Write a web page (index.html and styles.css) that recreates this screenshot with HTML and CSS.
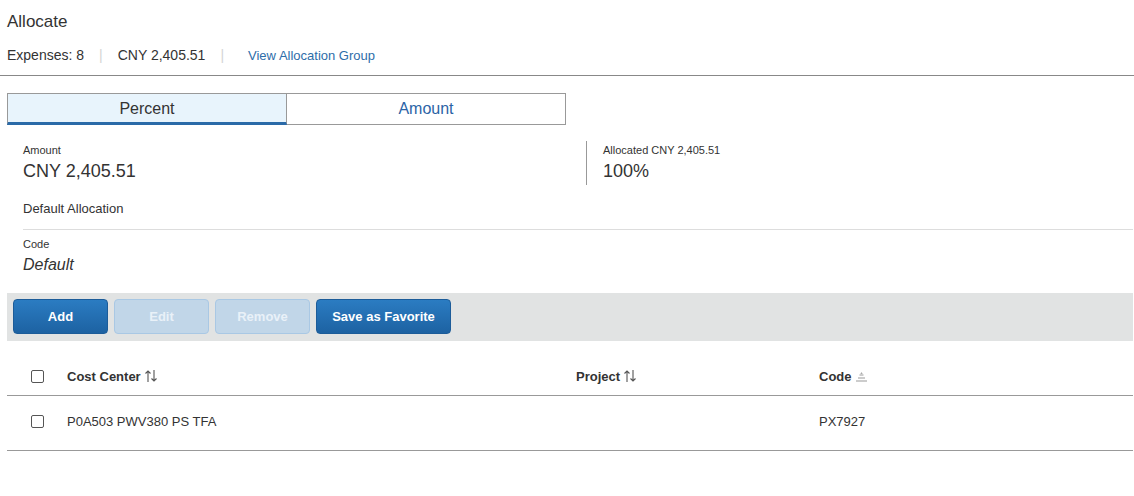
FILE: index.html
```html
<!DOCTYPE html>
<html lang="en">
<head>
    <meta charset="UTF-8">
    <title>Allocate</title>
    <link rel="stylesheet" href="styles.css">
</head>
<body>
    <div class="page-header">
        <div class="page-title">Allocate</div>
        <div class="meta-row">
            <span>Expenses: 8</span>
            <span class="sep">|</span>
            <span>CNY 2,405.51</span>
            <span class="sep">|</span>
            <a href="#" class="meta-link">View Allocation Group</a>
        </div>
    </div>

    <div class="content">
        <div class="tabs">
            <div class="tab active">Percent</div>
            <div class="tab">Amount</div>
        </div>

        <div class="summary">
            <div class="summary-col">
                <div class="field-label">Amount</div>
                <div class="field-value">CNY 2,405.51</div>
            </div>
            <div class="summary-col divided">
                <div class="field-label">Allocated CNY 2,405.51</div>
                <div class="field-value">100%</div>
            </div>
        </div>

        <div class="default-alloc">Default Allocation</div>

        <div class="code-field">
            <div class="field-label">Code</div>
            <div class="code-value">Default</div>
        </div>

        <div class="toolbar">
            <button class="btn">Add</button>
            <button class="btn" disabled>Edit</button>
            <button class="btn" disabled>Remove</button>
            <button class="btn wide">Save as Favorite</button>
        </div>

        <div class="grid">
            <div class="grid-row head">
                <div class="cell cb"><span class="checkbox"></span></div>
                <div class="cell">Cost Center
                    <svg class="sort-icon" width="14" height="14" viewBox="0 0 14 14">
                        <path d="M4 13V2M1.5 4.5L4 2l2.5 2.5" fill="none" stroke="#555" stroke-width="1.1"/>
                        <path d="M10 1v11M7.5 9.5L10 12l2.5-2.5" fill="none" stroke="#555" stroke-width="1.1"/>
                    </svg>
                </div>
                <div class="cell">Project
                    <svg class="sort-icon" width="14" height="14" viewBox="0 0 14 14">
                        <path d="M4 13V2M1.5 4.5L4 2l2.5 2.5" fill="none" stroke="#555" stroke-width="1.1"/>
                        <path d="M10 1v11M7.5 9.5L10 12l2.5-2.5" fill="none" stroke="#555" stroke-width="1.1"/>
                    </svg>
                </div>
                <div class="cell">Code
                    <svg class="sort-icon" width="13" height="12" viewBox="0 0 13 12">
                        <path d="M4.5 5h4M3 8h7M1 11h11" fill="none" stroke="#999" stroke-width="1"/>
                        <path d="M6.5 2L5.3 4h2.4z" fill="#aaa"/>
                    </svg>
                </div>
            </div>
            <div class="grid-row">
                <div class="cell cb"><span class="checkbox"></span></div>
                <div class="cell">P0A503 PWV380 PS TFA</div>
                <div class="cell"></div>
                <div class="cell">PX7927</div>
            </div>
        </div>
    </div>
</body>
</html>
```

FILE: styles.css
```css
body {
    margin: 0;
    font-family: "Liberation Sans", Arial, sans-serif;
    color: #333;
    background: #fff;
}

.page-header {
    padding: 11px 7px 9px;
    border-bottom: 1px solid #888;
}

.page-title {
    font-size: 17px;
    line-height: 22px;
}

.meta-row {
    margin-top: 12px;
    font-size: 14px;
    line-height: 20px;
    display: flex;
    align-items: baseline;
}

.sep {
    color: #d4d4d4;
    margin: 0 15px 0 15px;
}

.sep + .meta-link {
    margin-left: 9px;
}

.meta-link {
    color: #2e6da9;
    font-size: 13px;
    text-decoration: none;
}

.content {
    padding: 0 1px 0 7px;
}

.tabs {
    display: flex;
    width: 559px;
    margin-top: 17px;
}

.tab {
    flex: 1;
    height: 30px;
    line-height: 30px;
    text-align: center;
    font-size: 16px;
    color: #2b64a6;
    border: 1px solid #999;
    background: #fff;
}

.tab + .tab {
    border-left: none;
}

.tab.active {
    color: #333;
    background: #e8f4fc;
    height: 28px;
    line-height: 29px;
    border-bottom: 3px solid #2a6aa8;
}

.summary {
    display: flex;
    margin-top: 16px;
    padding-left: 16px;
}

.summary-col {
    width: 563px;
    padding: 2px 0 3px;
}

.summary-col.divided {
    width: auto;
    border-left: 1px solid #999;
    padding-left: 16px;
}

.field-label {
    font-size: 11px;
    line-height: 14px;
}

.field-value {
    font-size: 18px;
    line-height: 22px;
    margin-top: 3px;
}

.default-alloc {
    margin: 15px 0 0 16px;
    padding-bottom: 11px;
    font-size: 13px;
    line-height: 18px;
    border-bottom: 1px solid #ddd;
}

.code-field {
    padding: 7px 0 0 16px;
}

.code-value {
    font-size: 16px;
    font-style: italic;
    line-height: 20px;
    margin-top: 4px;
}

.toolbar {
    margin-top: 18px;
    background: #e1e3e3;
    padding: 6px 6px 7px;
    display: flex;
    gap: 6px;
}

.btn {
    width: 95px;
    height: 35px;
    border: 1px solid #1c5c99;
    border-radius: 4px;
    background: linear-gradient(#2b7cc2, #1d62a2);
    color: #fff;
    font-family: "Liberation Sans", Arial, sans-serif;
    font-size: 13px;
    font-weight: bold;
    cursor: pointer;
}

.btn:disabled {
    background: #c1d6e8;
    border-color: #a9c8e4;
    color: #e9f1f8;
    cursor: default;
}

.btn.wide {
    width: 135px;
}

.grid {
    margin-top: 16px;
}

.grid-row {
    display: grid;
    grid-template-columns: 60px 509px 243px 1fr;
    align-items: center;
    height: 54px;
    padding-bottom: 0;
    font-size: 13px;
    border-bottom: 1px solid #999;
}

.grid-row + .grid-row {
    height: 51px;
    padding-bottom: 3px;
}

.grid-row.head {
    height: 38px;
    font-weight: bold;
}

.cell {
    display: flex;
    align-items: center;
}

.cell.cb {
    justify-content: center;
    padding-left: 1px;
}

.checkbox {
    display: inline-block;
    width: 11px;
    height: 11px;
    border: 1px solid #555;
    border-radius: 2px;
    background: #fff;
}

.sort-icon {
    margin-left: 3px;
}
```
